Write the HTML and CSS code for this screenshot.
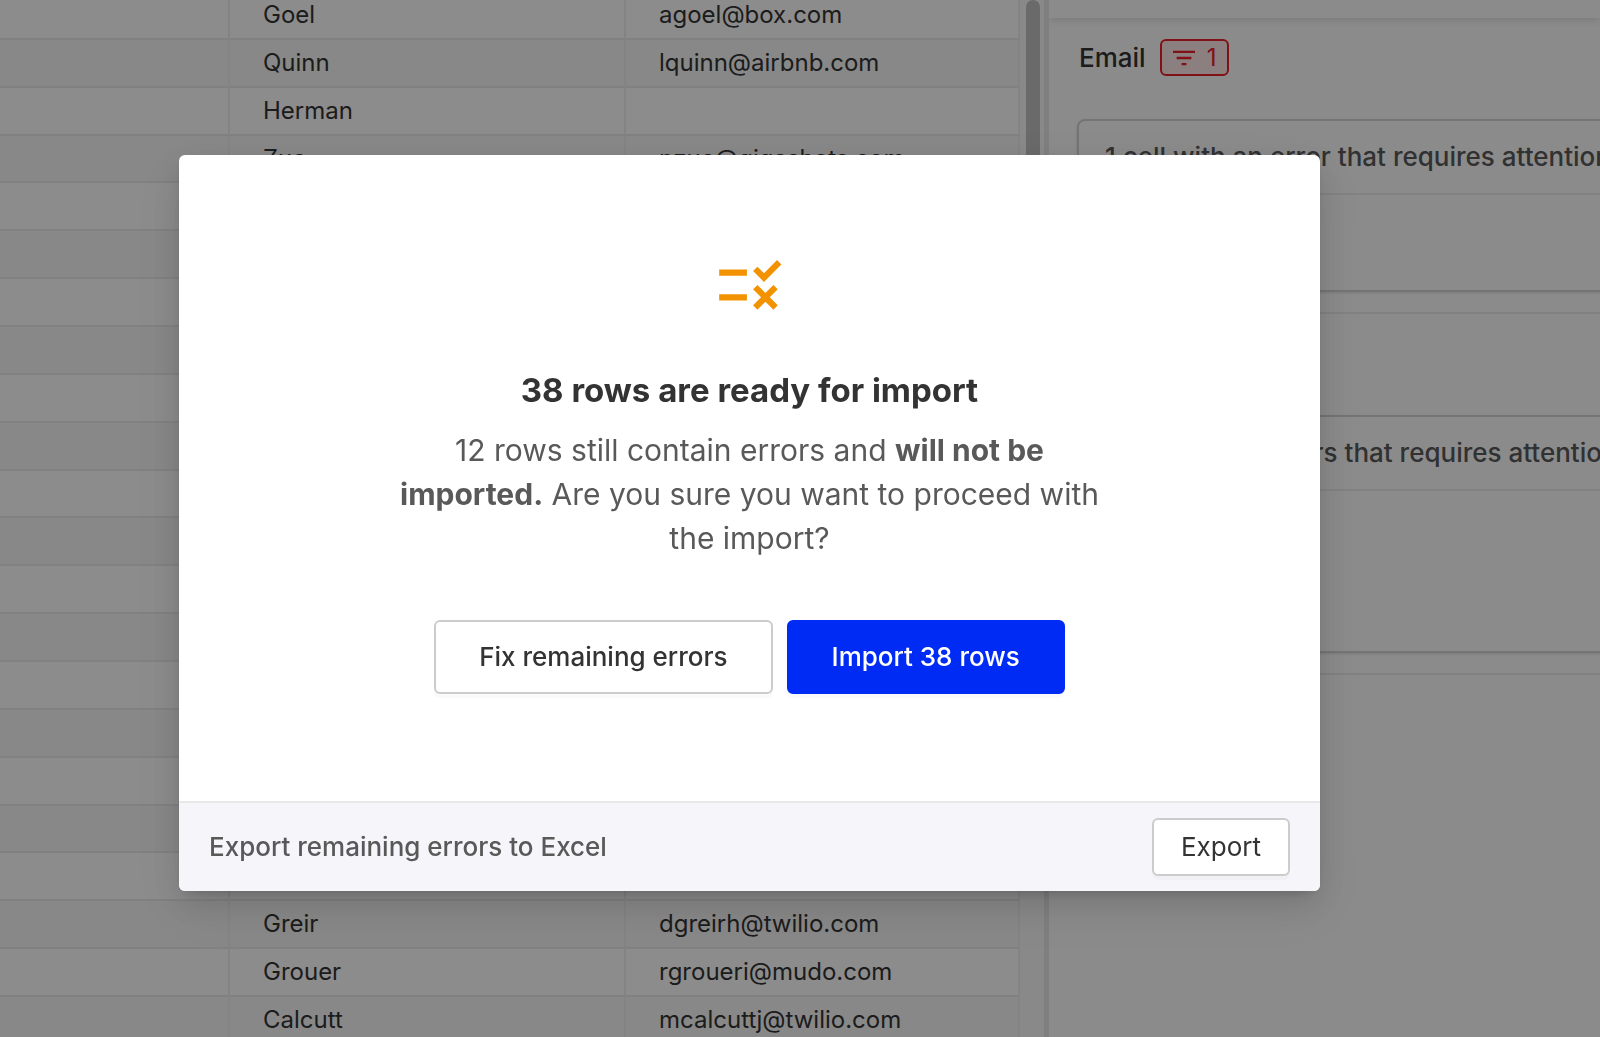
FILE: index.html
```html
<!DOCTYPE html>
<html lang="en">
<head>
<meta charset="utf-8">
<meta name="viewport" content="width=device-width, initial-scale=1">
<title>Import rows</title>
<link rel="stylesheet" href="styles.css">
</head>
<body>
<div class="app">
  <main class="sheet">
    <table class="grid">
      <colgroup><col class="col-first"><col class="col-last"><col class="col-email"></colgroup>
      <tbody>
        <tr><td></td><td>Goel</td><td>agoel@box.com</td></tr>
        <tr><td></td><td>Quinn</td><td>lquinn@airbnb.com</td></tr>
        <tr><td></td><td>Herman</td><td></td></tr>
        <tr><td></td><td>Zuo</td><td>nzuo@gigashots.com</td></tr>
        <tr><td></td><td></td><td></td></tr>
        <tr><td></td><td></td><td></td></tr>
        <tr><td></td><td></td><td></td></tr>
        <tr><td></td><td></td><td></td></tr>
        <tr><td></td><td></td><td></td></tr>
        <tr><td></td><td></td><td></td></tr>
        <tr><td></td><td></td><td></td></tr>
        <tr><td></td><td></td><td></td></tr>
        <tr><td></td><td></td><td></td></tr>
        <tr><td></td><td></td><td></td></tr>
        <tr><td></td><td></td><td></td></tr>
        <tr><td></td><td></td><td></td></tr>
        <tr><td></td><td></td><td></td></tr>
        <tr><td></td><td></td><td></td></tr>
        <tr><td></td><td></td><td></td></tr>
        <tr><td></td><td>Greir</td><td>dgreirh@twilio.com</td></tr>
        <tr><td></td><td>Grouer</td><td>rgroueri@mudo.com</td></tr>
        <tr><td></td><td>Calcutt</td><td>mcalcuttj@twilio.com</td></tr>
      </tbody>
    </table>
    <div class="track"><div class="thumb"></div></div>
  </main>
  <aside class="panel">
    <div class="panel-top"></div>
    <section class="issue">
      <header class="issue-head">
        <h2 class="issue-title">Email</h2>
        <button class="filter" type="button" aria-label="Filter 1 error">
          <svg class="filter-icon" viewBox="3 6 18 12" aria-hidden="true"><path d="M10 18h4v-2h-4v2zM3 6v2h18V6H3zm3 7h12v-2H6v2z"/></svg>
          <span>1</span>
        </button>
      </header>
      <div class="card"><p class="card-title">1 cell with an error that requires attention</p><div class="card-body"></div></div>
    </section>
    <section class="issue">
      <header class="issue-head"></header>
      <div class="card"><p class="card-title">12 cells with errors that requires attention</p><div class="card-body card-body-tall"></div></div>
    </section>
  </aside>
</div>

<div class="overlay">
  <div class="modal" role="dialog" aria-modal="true" aria-labelledby="modal-title">
    <div class="modal-body">
      <svg class="rule-icon" viewBox="0 0 24 24" aria-hidden="true"><path d="M16.54 11L13 7.46l1.41-1.41 2.12 2.12 4.24-4.24 1.41 1.41L16.54 11zM11 7H2v2h9V7zm10 6.41L19.59 12 17 14.59 14.41 12 13 13.41 15.59 16 13 18.59 14.41 20 17 17.41 19.59 20 21 18.59 18.41 16 21 13.41zM11 15H2v2h9v-2z"/></svg>
      <h1 class="modal-title" id="modal-title">38 rows are ready for import</h1>
      <p class="modal-text">12 rows still contain errors and <strong>will not be imported.</strong> Are you sure you want to proceed with the import?</p>
      <div class="actions">
        <button class="btn btn-large" type="button">Fix remaining errors</button>
        <button class="btn btn-large btn-primary" type="button">Import 38 rows</button>
      </div>
    </div>
    <footer class="modal-foot">
      <span class="foot-text">Export remaining errors to Excel</span>
      <button class="btn" type="button">Export</button>
    </footer>
  </div>
</div>
</body>
</html>
```
FILE: styles.css
```css
* {
  box-sizing: border-box;
}

body {
  margin: 0;
  font-family: Inter, "Liberation Sans", sans-serif;
  color: #333;
  background: #fff;
}

h1, h2, p {
  margin: 0;
}

button {
  font-family: inherit;
  cursor: pointer;
}

.app {
  display: flex;
  height: 100vh;
  overflow: hidden;
}

/* spreadsheet, scrolled part of the way down */
.sheet {
  flex: none;
  display: flex;
  width: 1049px;
  border-right: 5px solid #e8e8e8;
}

.grid {
  flex: 1;
  height: calc(100vh + 16px);
  margin-top: -8px;
  table-layout: fixed;
  border-collapse: separate;
  border-spacing: 0;
  font-size: 24px;
  line-height: 32px;
}

.col-first {
  width: 230px;
}

.col-last {
  width: 396px;
}

.grid td {
  height: 47px;
  padding: 0 33px;
  border-right: 2px solid #f0f0f0;
  border-bottom: 2px solid #ebebeb;
  white-space: nowrap;
}

.grid tr:nth-child(even) {
  background: #f8f8f8;
}

.track {
  width: 24px;
  padding: 0 4px 0 6px;
  background: #fafafa;
}

.thumb {
  height: 60%;
  border-radius: 7px;
  background: #c1c1c1;
}

/* list of problems */
.panel {
  flex: 1;
  min-width: 0;
  overflow: hidden;
  background: #fefefe;
}

.panel-top {
  height: 18px;
  box-shadow: 0 2px 10px rgba(0, 0, 0, 0.14);
}

.issue {
  padding: 0 28px 20px;
  border-bottom: 2px solid #ececec;
}

.issue-head {
  display: flex;
  align-items: center;
  gap: 14px;
  height: 101px;
  padding: 0 2px 22px;
}

.issue-title {
  font-size: 26px;
  line-height: 32px;
  font-weight: 500;
}

.filter {
  display: flex;
  align-items: center;
  gap: 12px;
  height: 37px;
  padding: 0 11px;
  border: 2px solid #e8202a;
  border-radius: 6px;
  background: #fde8e8;
  color: #e8202a;
  font-size: 24px;
}

.filter-icon {
  width: 22px;
  height: 16px;
  fill: currentColor;
}

.card {
  width: 640px;
  border: 2px solid #d4d4d4;
  border-radius: 8px;
  box-shadow: 0 1px 3px rgba(0, 0, 0, 0.12);
}

.card-title {
  padding: 20px 26px;
  border-bottom: 2px solid #ededed;
  color: #595959;
  font-size: 26px;
  line-height: 32px;
  font-weight: 500;
  white-space: nowrap;
}

.card-body {
  height: 95px;
}

.card-body-tall {
  height: 160px;
}

/* confirmation dialog */
.overlay {
  position: fixed;
  inset: 0;
  display: flex;
  align-items: flex-start;
  padding: 155px 280px 0 179px;
  background: rgba(0, 0, 0, 0.45);
}

.modal {
  flex: 1;
  overflow: hidden;
  border-radius: 6px;
  background: #fff;
  box-shadow: 0 6px 12px -8px rgba(0, 0, 0, 0.3), 0 12px 32px rgba(0, 0, 0, 0.12), 0 18px 56px 8px rgba(0, 0, 0, 0.06);
}

.modal-body {
  display: flex;
  flex-direction: column;
  align-items: center;
  padding: 93px 32px 107px;
}

.rule-icon {
  width: 74px;
  height: 74px;
  fill: #f39200;
}

.modal-title {
  margin-top: 44px;
  font-size: 33px;
  line-height: 48px;
  font-weight: 700;
  text-align: center;
}

.modal-text {
  max-width: 700px;
  margin-top: 14px;
  color: #595959;
  font-size: 30px;
  line-height: 44px;
  text-align: center;
}

.actions {
  display: flex;
  gap: 14px;
  margin-top: 60px;
}

.btn {
  height: 58px;
  padding: 0 27px;
  border: 2px solid #ccc;
  border-radius: 6px;
  background: #fff;
  box-shadow: 0 4px 0 rgba(0, 0, 0, 0.02);
  color: #333;
  font-size: 26px;
  line-height: 32px;
}

.btn-large {
  height: 74px;
  padding: 0 43px;
  font-weight: 500;
}

.btn-primary {
  border-color: #002bf5;
  background: #002bf5;
  color: #fff;
}

.modal-foot {
  display: flex;
  align-items: center;
  justify-content: space-between;
  padding: 15px 30px;
  border-top: 2px solid #e8e8e8;
  background: #f5f5fa;
}

.foot-text {
  color: #595959;
  font-size: 26px;
  line-height: 32px;
  font-weight: 500;
}
```
